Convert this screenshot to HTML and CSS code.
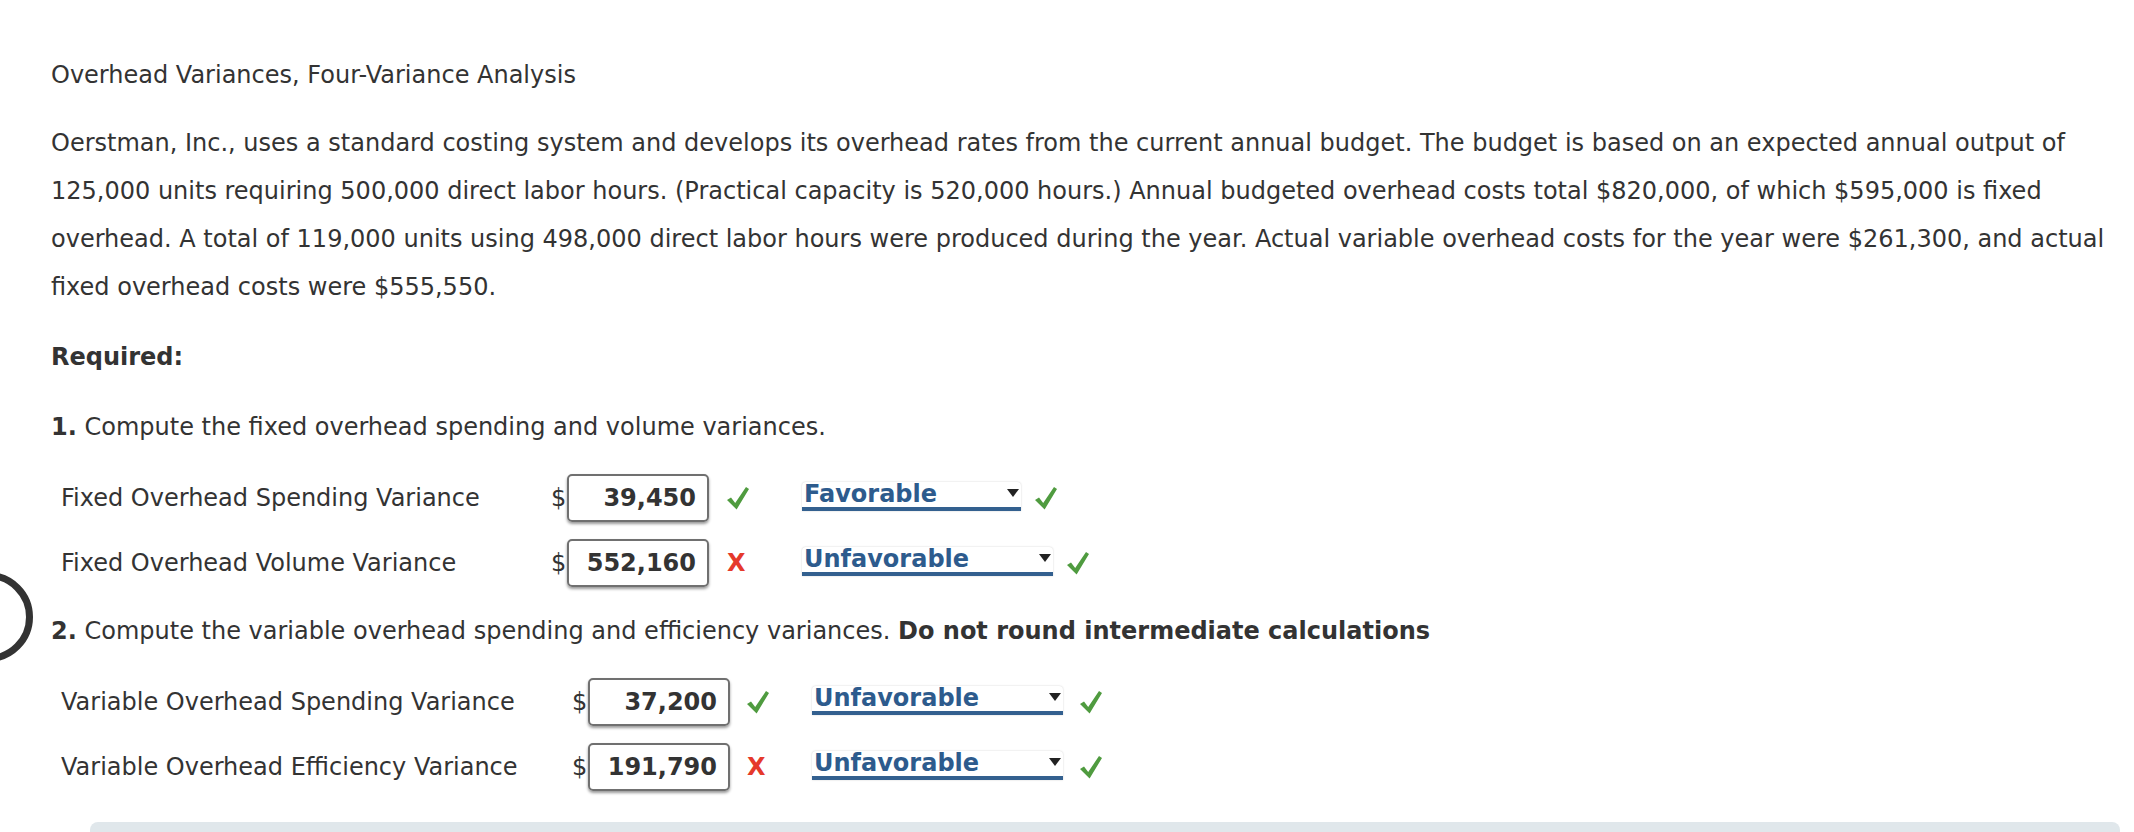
FILE: index.html
```html
<!DOCTYPE html>
<html lang="en">
<head>
<meta charset="utf-8">
<title>Overhead Variances, Four-Variance Analysis</title>
<link rel="stylesheet" href="styles.css">
</head>
<body>
<div class="page">
  <div class="ring"></div>
  <h1 class="title">Overhead Variances, Four-Variance Analysis</h1>
  <p class="problem">Oerstman, Inc., uses a standard costing system and develops its overhead rates from the current annual budget. The budget is based on an expected annual output of 125,000 units requiring 500,000 direct labor hours. (Practical capacity is 520,000 hours.) Annual budgeted overhead costs total $820,000, of which $595,000 is fixed overhead. A total of 119,000 units using 498,000 direct labor hours were produced during the year. Actual variable overhead costs for the year were $261,300, and actual fixed overhead costs were $555,550.</p>
  <p class="required">Required:</p>
  <p class="part part-one"><b>1.</b> Compute the fixed overhead spending and volume variances.</p>
  <div class="answers answers-one">
    <div class="row">
      <span class="label">Fixed Overhead Spending Variance</span>
      <span class="dollar">$</span>
      <span class="field">39,450</span>
      <span class="mark"><svg class="check" viewBox="0 0 22 24" width="22" height="24"><path d="M0 14 L4 11.5 L8.2 17 L19 1 L22 3 L9.6 23.5 Z"/></svg></span>
      <span class="select">Favorable<i class="arrow"></i></span>
      <svg class="check after" viewBox="0 0 22 24" width="22" height="24"><path d="M0 14 L4 11.5 L8.2 17 L19 1 L22 3 L9.6 23.5 Z"/></svg>
    </div>
    <div class="row">
      <span class="label">Fixed Overhead Volume Variance</span>
      <span class="dollar">$</span>
      <span class="field">552,160</span>
      <span class="mark"><span class="cross">X</span></span>
      <span class="select">Unfavorable<i class="arrow"></i></span>
      <svg class="check after" viewBox="0 0 22 24" width="22" height="24"><path d="M0 14 L4 11.5 L8.2 17 L19 1 L22 3 L9.6 23.5 Z"/></svg>
    </div>
  </div>
  <p class="part part-two"><b>2.</b> Compute the variable overhead spending and efficiency variances. <b>Do not round intermediate calculations</b></p>
  <div class="answers answers-two">
    <div class="row">
      <span class="label">Variable Overhead Spending Variance</span>
      <span class="dollar">$</span>
      <span class="field">37,200</span>
      <span class="mark"><svg class="check" viewBox="0 0 22 24" width="22" height="24"><path d="M0 14 L4 11.5 L8.2 17 L19 1 L22 3 L9.6 23.5 Z"/></svg></span>
      <span class="select">Unfavorable<i class="arrow"></i></span>
      <svg class="check after" viewBox="0 0 22 24" width="22" height="24"><path d="M0 14 L4 11.5 L8.2 17 L19 1 L22 3 L9.6 23.5 Z"/></svg>
    </div>
    <div class="row">
      <span class="label">Variable Overhead Efficiency Variance</span>
      <span class="dollar">$</span>
      <span class="field">191,790</span>
      <span class="mark"><span class="cross">X</span></span>
      <span class="select">Unfavorable<i class="arrow"></i></span>
      <svg class="check after" viewBox="0 0 22 24" width="22" height="24"><path d="M0 14 L4 11.5 L8.2 17 L19 1 L22 3 L9.6 23.5 Z"/></svg>
    </div>
  </div>
  <div class="footer-bar"></div>
</div>
</body>
</html>
```
FILE: styles.css
```css
html, body {
  margin: 0;
  padding: 0;
  overflow: hidden;
  background: #ffffff;
}

body {
  font-family: "DejaVu Sans", Verdana, sans-serif;
  font-size: 24px;
  color: #333333;
}

.page {
  position: relative;
  padding: 51px 14px 0 51px;
}

.ring {
  position: absolute;
  left: -57px;
  top: 572px;
  width: 76px;
  height: 76px;
  border: 7px solid #333333;
  border-radius: 50%;
}

.title {
  margin: 0;
  font-size: 24px;
  font-weight: normal;
  line-height: 48px;
}

.problem {
  margin: 20px 0 0 0;
  line-height: 48px;
}

.required {
  margin: 22px 0 0 0;
  line-height: 48px;
  font-weight: bold;
}

.part {
  margin: 22px 0 0 0;
  line-height: 48px;
}

.part-two {
  margin-top: 12px;
}

.answers {
  display: flex;
  flex-direction: column;
  margin-top: 14px;
  padding-left: 10px;
}

.answers-two {
  margin-top: 14px;
}

.row {
  display: flex;
  align-items: center;
  height: 65px;
}

.label {
  width: 490px;
  flex: none;
}

.answers-two .label {
  width: 511px;
}

.dollar {
  width: 16px;
  flex: none;
}

.field {
  box-sizing: border-box;
  width: 142px;
  height: 48px;
  flex: none;
  border: 2px solid #707070;
  border-radius: 5px;
  box-shadow: 0 2px 3px rgba(0, 0, 0, 0.4);
  padding-right: 11px;
  text-align: right;
  font-weight: bold;
  line-height: 44px;
  color: #333333;
}

.mark {
  width: 93px;
  flex: none;
  padding-left: 18px;
  box-sizing: border-box;
  display: flex;
  align-items: center;
}

.answers-two .mark {
  width: 82px;
  padding-left: 17px;
}

.check {
  fill: #4f9b3f;
  display: block;
}

.check.after {
  margin-left: 14px;
  flex: none;
}

.answers-two .check.after {
  margin-left: 17px;
}

.cross {
  color: #e5392b;
  font-weight: bold;
  font-size: 24px;
  line-height: 24px;
  display: block;
}

.select {
  display: inline-flex;
  align-items: center;
  flex: none;
  margin-top: -3px;
  padding: 0 2px 0 2px;
  height: 25px;
  line-height: 25px;
  font-weight: bold;
  color: #2d5b8d;
  background: #ffffff;
  border-bottom: 4px solid #33608f;
  border-radius: 4px 4px 0 0;
  box-shadow: 0 0 2px rgba(0, 0, 0, 0.2);
}

.arrow {
  display: block;
  margin-left: 70px;
  width: 0;
  height: 0;
  border-left: 6.5px solid transparent;
  border-right: 6.5px solid transparent;
  border-top: 8px solid #222222;
  margin-top: -3px;
}

.footer-bar {
  margin: 23px 0 0 39px;
  height: 40px;
  background: #e0e7eb;
  border-radius: 8px 8px 0 0;
}
```
